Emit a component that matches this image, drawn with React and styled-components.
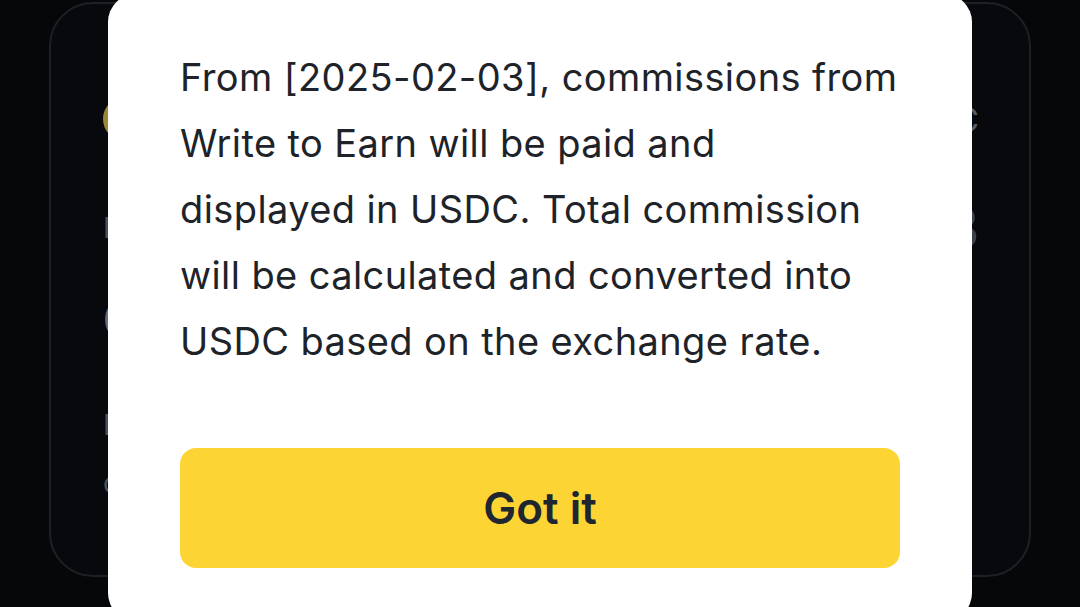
import styled, { createGlobalStyle } from "styled-components";

const GlobalStyle = createGlobalStyle`
  html, body {
    margin: 0;
    padding: 0;
    background: #060709;
    overflow: hidden;
  }
  * { box-sizing: border-box; }
`;

const Page = styled.div`
  position: relative;
  width: 1080px;
  height: 607px;
  padding: 2px 49px 0;
  font-family: "Inter", "Noto Sans", sans-serif;
`;

const Card = styled.div`
  height: 575px;
  border: 2px solid #1d2026;
  border-radius: 44px;
  background: #08090c;
  padding: 70px 50px 0 52px;
  display: flex;
  flex-direction: column;
`;

const Row = styled.div`
  display: flex;
  align-items: center;
  justify-content: space-between;
  height: ${(p) => p.$h}px;
  margin-top: ${(p) => p.$mt || 0}px;
`;

const Coin = styled.div`
  width: 44px;
  height: 44px;
  border-radius: 50%;
  background: #9a8834;
  flex-shrink: 0;
`;

const Muted = styled.span`
  color: ${(p) => p.$color || "#4d525a"};
  font-size: ${(p) => p.$size || 28}px;
  font-weight: ${(p) => p.$weight || 400};
`;

const Overlay = styled.div`
  position: absolute;
  inset: 0;
  display: flex;
  justify-content: center;
  align-items: flex-end;
`;

const Modal = styled.div`
  width: 864px;
  margin-bottom: -14px;
  background: #ffffff;
  border-radius: 28px;
  padding: 50px 72px 53px;
  display: flex;
  flex-direction: column;
`;

const Message = styled.p`
  margin: 0;
  color: #1e2329;
  font-size: 38px;
  line-height: 66px;
  letter-spacing: 0.4px;
  white-space: nowrap;
`;

const Button = styled.button`
  margin-top: 74px;
  height: 120px;
  width: 100%;
  border: none;
  border-radius: 16px;
  background: #fcd535;
  color: #202630;
  font-family: inherit;
  font-size: 44px;
  font-weight: 600;
  cursor: pointer;
`;

export default function App() {
  return (
    <>
      <GlobalStyle />
      <Page>
        <Card>
          <Row $h={90}>
            <Coin />
            <Muted $color="#575c64" $size={34}>C</Muted>
          </Row>
          <Row $h={60} $mt={34}>
            <Muted>L</Muted>
            <Muted $color="#3c4047" $size={56} $weight={700}>3</Muted>
          </Row>
          <Row $h={50} $mt={36}>
            <Muted $color="#6a6e75" $size={48} $weight={700}>0</Muted>
          </Row>
          <Row $h={42} $mt={60}>
            <Muted>D</Muted>
          </Row>
          <Row $h={34} $mt={20}>
            <Muted>c</Muted>
          </Row>
        </Card>
        <Overlay>
          <Modal>
            <Message>
              From [2025-02-03], commissions from
              <br />
              Write to Earn will be paid and
              <br />
              displayed in USDC. Total commission
              <br />
              will be calculated and converted into
              <br />
              USDC based on the exchange rate.
            </Message>
            <Button>Got it</Button>
          </Modal>
        </Overlay>
      </Page>
    </>
  );
}
